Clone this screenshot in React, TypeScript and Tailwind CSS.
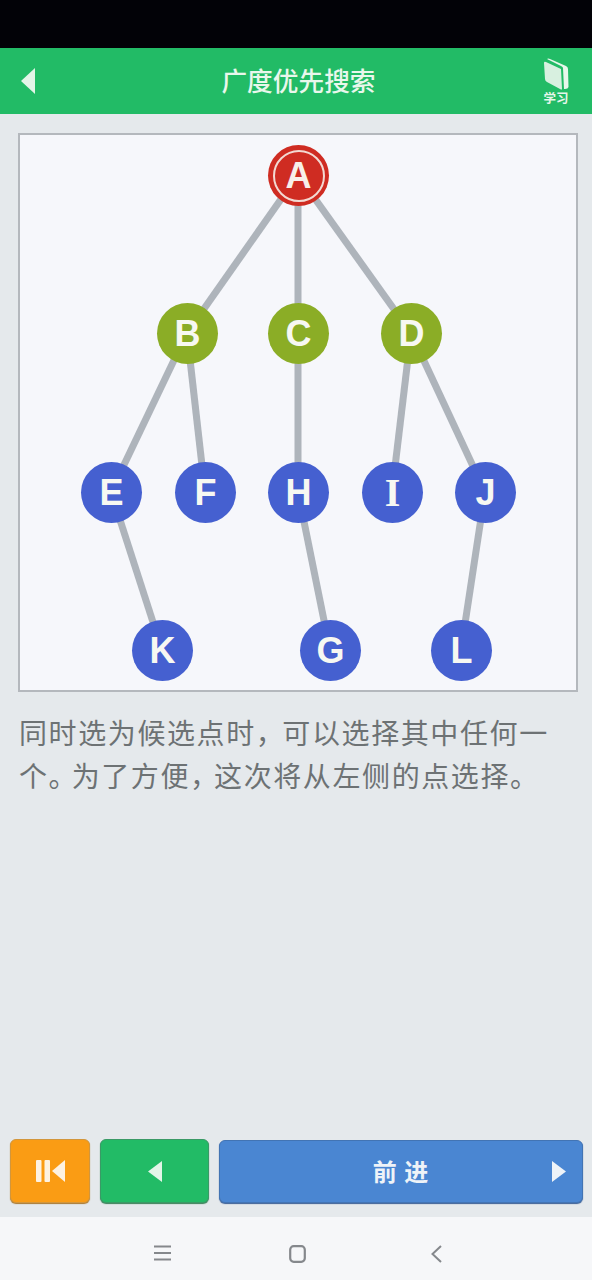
import React from 'react';

const FONT = "font-['Noto_Sans_CJK_SC','Noto_Sans',sans-serif]";

// graph nodes, classes written out per node (centre minus radius minus box origin)
const nodes = [
  { label: 'B', pos: 'left-[137px] top-[168px]', color: 'bg-[#8bad26]', font: "font-['Liberation_Sans',sans-serif]" },
  { label: 'C', pos: 'left-[248px] top-[168px]', color: 'bg-[#8bad26]', font: "font-['Liberation_Sans',sans-serif]" },
  { label: 'D', pos: 'left-[361px] top-[168px]', color: 'bg-[#8bad26]', font: "font-['Liberation_Sans',sans-serif]" },
  { label: 'E', pos: 'left-[61px] top-[327px]', color: 'bg-[#4560d0]', font: "font-['Liberation_Sans',sans-serif]" },
  { label: 'F', pos: 'left-[155px] top-[327px]', color: 'bg-[#4560d0]', font: "font-['Liberation_Sans',sans-serif]" },
  { label: 'H', pos: 'left-[248px] top-[327px]', color: 'bg-[#4560d0]', font: "font-['Liberation_Sans',sans-serif]" },
  { label: 'I', pos: 'left-[342px] top-[327px]', color: 'bg-[#4560d0]', font: "font-['Liberation_Serif',serif]" },
  { label: 'J', pos: 'left-[435px] top-[327px]', color: 'bg-[#4560d0]', font: "font-['Liberation_Sans',sans-serif]" },
  { label: 'K', pos: 'left-[112px] top-[485px]', color: 'bg-[#4560d0]', font: "font-['Liberation_Sans',sans-serif]" },
  { label: 'G', pos: 'left-[280px] top-[485px]', color: 'bg-[#4560d0]', font: "font-['Liberation_Sans',sans-serif]" },
  { label: 'L', pos: 'left-[411px] top-[485px]', color: 'bg-[#4560d0]', font: "font-['Liberation_Sans',sans-serif]" },
];

const edges = [
  [278, 40, 167, 198],
  [278, 40, 278, 198],
  [278, 40, 391, 198],
  [167, 198, 91, 357],
  [167, 198, 185, 357],
  [278, 198, 278, 357],
  [391, 198, 372, 357],
  [391, 198, 465, 357],
  [91, 357, 142, 515],
  [278, 357, 310, 515],
  [465, 357, 441, 515],
];

const Graph = () => (
  <div className="relative h-[559px] w-[560px] border-2 border-[#b4b8bd] bg-[#f6f7fb]">
    <svg className="absolute left-0 top-0 h-full w-full" viewBox="0 0 556 555">
      {edges.map((e, i) => (
        <line key={i} x1={e[0]} y1={e[1]} x2={e[2]} y2={e[3]} stroke="#aeb4bb" strokeWidth="7" />
      ))}
    </svg>
    {/* root node has the double ring */}
    <div className="absolute left-[248px] top-[10px] flex h-[61px] w-[61px] items-center justify-center rounded-full bg-[#cf2c22]">
      <div className="flex h-[52px] w-[52px] items-center justify-center rounded-full border-2 border-[#f3d9d2] text-[36px] font-bold text-[#f8efe9] font-['Liberation_Sans',sans-serif]">
        A
      </div>
    </div>
    {nodes.map((n) => (
      <div
        key={n.label}
        className={`absolute flex h-[61px] w-[61px] items-center justify-center rounded-full font-bold text-[#f7f8f2] ${n.label === 'I' ? 'text-[40px]' : 'text-[36px]'} ${n.font} ${n.pos} ${n.color}`}
      >
        {n.label}
      </div>
    ))}
  </div>
);

export default function App() {
  return (
    <div className={`flex h-[1280px] w-[592px] flex-col overflow-hidden bg-[#e5e9ec] ${FONT}`}>
      <div className="h-12 bg-[#020207]" />

      <header className="flex h-[66px] items-center justify-between bg-[#22bb66] pl-[21px] pr-[21px]">
        <svg width="15" height="26" viewBox="0 0 15 26">
          <path d="M14 0 L0 13 L14 26 Z" fill="#e3f5e8" />
        </svg>
        <h1 className="mb-[2px] ml-[20px] text-[25.7px] font-medium leading-none text-[#e9f7ec]">广度优先搜索</h1>
        <div className="flex w-[30px] flex-col items-center">
          <svg width="26" height="32" viewBox="0 0 26 32">
            <path d="M1 5 Q1 3 3 4 L18 11 L19 31 Q19 32 17 31 L4 24 Q2 23 2 21 Z" fill="#d8f0e0" />
            <path d="M4 1 Q5 0 7 1 L23 8 Q25 9 25 11 L25.5 29 Q25 31 22 31 L21 31 L20 10 Q20 9 18 8 Z" fill="#e8f7ec" />
          </svg>
          <span className="mt-[2px] text-[12.5px] font-bold leading-none text-[#e6f6ea]">学习</span>
        </div>
      </header>

      <main className="flex flex-1 flex-col px-[18px] pt-[19px]">
        <Graph />
        {/* lines broken by hand, the punctuation is narrower than a full cell */}
        <div className="mt-[19px] pl-[1px] text-[28px] leading-[43px] tracking-[1.6px] text-[#6d7274]">
          <p>
            同时选为候选点时<span className="tracking-[12.5px] [font-feature-settings:'halt']">，</span>可以选择其中任何一
          </p>
          <p>
            个<span className="tracking-[9px] [font-feature-settings:'halt']">。</span>为了方便<span className="tracking-[10px] [font-feature-settings:'halt']">，</span>这次将从左侧的点选择。
          </p>
        </div>
      </main>

      <div className="flex items-start gap-[10px] pb-[14px] pl-[10px] pr-[9px]">
        <button className="flex h-[64px] w-[80px] items-center justify-center rounded-md border border-[#d2963c] bg-[#fa9c14] shadow-[0_1px_1px_#a9772d]">
          <svg width="29" height="22" viewBox="0 0 29 22">
            <rect x="0" y="0" width="5.5" height="22" rx="1" fill="#fdf2e2" />
            <rect x="8.5" y="0" width="5.5" height="22" rx="1" fill="#fdf2e2" />
            <path d="M29 0 L16 11 L29 22 Z" fill="#fdf2e2" />
          </svg>
        </button>
        <button className="flex h-[64px] w-[109px] items-center justify-center rounded-md border border-[#3a9a66] bg-[#22bb66] shadow-[0_1px_1px_#3a8058]">
          <svg width="14" height="21" viewBox="0 0 14 21">
            <path d="M14 0 L0 10.5 L14 21 Z" fill="#e3f5e8" />
          </svg>
        </button>
        <button className="relative mt-[1px] flex h-[63px] flex-1 items-center justify-center rounded-md border border-[#4274b4] bg-[#4a86d2] shadow-[0_1px_1px_#3a5f96]">
          <span className="mb-[2px] text-[24px] font-bold leading-none tracking-[1px] text-[#eef3f8]">前 进</span>
          <svg className="absolute right-[16px] top-[20px]" width="14" height="21" viewBox="0 0 14 21">
            <path d="M0 0 L14 10.5 L0 21 Z" fill="#eef3f8" />
          </svg>
        </button>
      </div>

      <nav className="flex h-[63px] items-start justify-center bg-[#f6f7f9] pl-[4px] pt-[28px]">
        <svg className="mr-[118px]" width="17" height="16" viewBox="0 0 17 16" fill="none" stroke="#85888c" strokeWidth="2">
          <path d="M0 1.5 H17 M0 8 H17 M0 14.5 H17" />
        </svg>
        <svg className="mr-[125px]" width="17" height="18" viewBox="0 0 17 18" fill="none" stroke="#85888c" strokeWidth="2.2">
          <rect x="1.2" y="1.2" width="14.6" height="15.6" rx="3.5" />
        </svg>
        <svg width="11" height="18" viewBox="0 0 11 18" fill="none" stroke="#85888c" strokeWidth="2">
          <path d="M10 1 L1.5 9 L10 17" />
        </svg>
      </nav>
    </div>
  );
}
